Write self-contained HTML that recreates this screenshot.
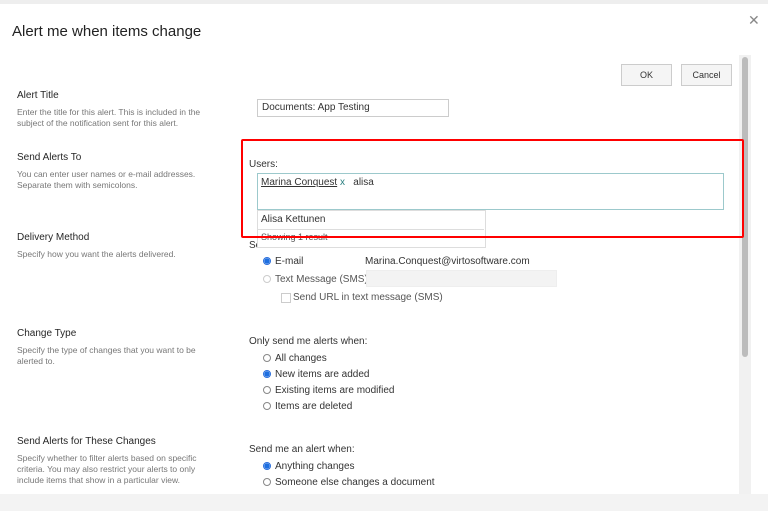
<!DOCTYPE html>
<html><head><style>
body{margin:0;width:768px;height:511px;position:relative;background:#fff;font-family:"Liberation Sans",sans-serif;overflow:hidden;color:#333}
.a{position:absolute;white-space:nowrap}
.h{font-size:10px;color:#262626}
.d{font-size:8.5px;color:#777;line-height:11px;white-space:normal;width:200px}
.t{font-size:10px;color:#333}
.r{position:absolute;width:8px;height:8px;border:1px solid #888;border-radius:50%;background:#fff;box-sizing:border-box}
.r.on{border:1px solid #2a6edb;background:radial-gradient(circle,#1e6fe0 2.5px,#fff 3px)}
</style></head><body>
<div class="a" style="left:0;top:0;width:768px;height:4px;background:#eee"></div>
<div class="a" style="left:0;top:494px;width:768px;height:17px;background:#f3f3f3"></div>
<div class="a" style="left:748px;top:12px;font-size:14px;color:#888">✕</div>
<div class="a" style="left:12px;top:23px;font-size:15px;color:#222">Alert me when items change</div>
<div class="a" style="left:621px;top:64px;width:49px;height:20px;border:1px solid #ccc;background:#f5f5f5;font-size:9px;text-align:center;line-height:20px">OK</div>
<div class="a" style="left:681px;top:64px;width:49px;height:20px;border:1px solid #ccc;background:#f5f5f5;font-size:9px;text-align:center;line-height:20px">Cancel</div>
<div class="a" style="left:739px;top:55px;width:12px;height:439px;background:#f1f1f1"></div>
<div class="a" style="left:742px;top:57px;width:6px;height:300px;background:#bcbcbc;border-radius:3px"></div>

<div class="a h" style="left:17px;top:90px">Alert Title</div>
<div class="a d" style="left:17px;top:107px">Enter the title for this alert. This is included in the subject of the notification sent for this alert.</div>
<div class="a" style="left:257px;top:99px;width:186px;height:16px;border:1px solid #ccc;font-size:10px;line-height:16px;padding-left:4px">Documents: App Testing</div>

<div class="a h" style="left:17px;top:152px">Send Alerts To</div>
<div class="a d" style="left:17px;top:169px">You can enter user names or e-mail addresses. Separate them with semicolons.</div>

<div class="a t" style="left:249px;top:159px">Users:</div>
<div class="a" style="left:257px;top:173px;width:465px;height:35px;border:1px solid #9cc9cc"></div>
<div class="a t" style="left:261px;top:177px"><span style="text-decoration:underline">Marina Conquest</span> <span style="color:#2a7f80">x</span> &nbsp; alisa</div>
<div class="a" style="left:249px;top:240px;font-size:10px">Se</div>
<div class="a" style="left:257px;top:210px;width:227px;height:36px;border:1px solid #ddd;background:#fff"></div>
<div class="a t" style="left:261px;top:214px">Alisa Kettunen</div>
<div class="a" style="left:258px;top:229px;width:226px;height:1px;background:#ddd"></div>
<div class="a" style="left:261px;top:232px;font-size:9px;color:#555">Showing 1 result</div>
<div class="a" style="left:241px;top:139px;width:499px;height:95px;border:2px solid #f00;border-radius:2px"></div>

<div class="a h" style="left:17px;top:232px">Delivery Method</div>
<div class="a d" style="left:17px;top:249px">Specify how you want the alerts delivered.</div>
<div class="r on" style="left:263px;top:257px"></div><div class="a t" style="left:275px;top:256px">E-mail</div>
<div class="a t" style="left:365px;top:256px">Marina.Conquest@virtosoftware.com</div>
<div class="r" style="left:263px;top:275px;border-color:#ccc"></div><div class="a t" style="left:275px;top:274px;color:#555">Text Message (SMS)</div>
<div class="a" style="left:366px;top:270px;width:189px;height:15px;background:#f3f3f3;border:1px solid #eee"></div>
<div class="a" style="left:281px;top:293px;width:8px;height:8px;border:1px solid #ccc"></div><div class="a t" style="left:293px;top:292px;color:#555">Send URL in text message (SMS)</div>

<div class="a h" style="left:17px;top:328px">Change Type</div>
<div class="a d" style="left:17px;top:345px">Specify the type of changes that you want to be alerted to.</div>
<div class="a t" style="left:249px;top:336px">Only send me alerts when:</div>
<div class="r" style="left:263px;top:354px"></div><div class="a t" style="left:275px;top:353px">All changes</div>
<div class="r on" style="left:263px;top:370px"></div><div class="a t" style="left:275px;top:369px">New items are added</div>
<div class="r" style="left:263px;top:386px"></div><div class="a t" style="left:275px;top:385px">Existing items are modified</div>
<div class="r" style="left:263px;top:402px"></div><div class="a t" style="left:275px;top:401px">Items are deleted</div>

<div class="a h" style="left:17px;top:436px">Send Alerts for These Changes</div>
<div class="a d" style="left:17px;top:453px">Specify whether to filter alerts based on specific criteria. You may also restrict your alerts to only include items that show in a particular view.</div>
<div class="a t" style="left:249px;top:444px">Send me an alert when:</div>
<div class="r on" style="left:263px;top:462px"></div><div class="a t" style="left:275px;top:461px">Anything changes</div>
<div class="r" style="left:263px;top:478px"></div><div class="a t" style="left:275px;top:477px">Someone else changes a document</div>
</body></html>
